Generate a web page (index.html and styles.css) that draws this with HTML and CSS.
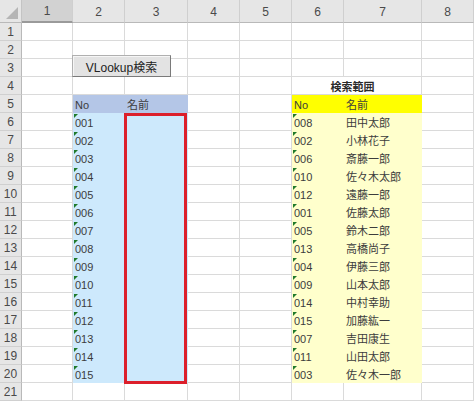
FILE: index.html
```html
<!DOCTYPE html>
<html lang="ja">
<head>
<meta charset="utf-8">
<title>VLookup</title>
<link rel="stylesheet" href="styles.css">
</head>
<body>
<div class="sheet">
  <div class="row head">
    <div class="corner"><span class="corner-tri"></span></div>
    <div class="ch sel">1</div><div class="ch">2</div><div class="ch">3</div><div class="ch">4</div><div class="ch">5</div><div class="ch">6</div><div class="ch">7</div><div class="ch">8</div>
  </div>
  <div class="row"><div class="rh">1</div><div class="c"></div><div class="c"></div><div class="c"></div><div class="c"></div><div class="c"></div><div class="c"></div><div class="c"></div><div class="c"></div></div>
  <div class="row"><div class="rh">2</div><div class="c"></div><div class="c"></div><div class="c"></div><div class="c"></div><div class="c"></div><div class="c"></div><div class="c"></div><div class="c"></div></div>
  <div class="row"><div class="rh">3</div><div class="c"></div><div class="c"></div><div class="c"></div><div class="c"></div><div class="c"></div><div class="c"></div><div class="c"></div><div class="c"></div></div>
  <div class="row"><div class="rh">4</div><div class="c"></div><div class="c"></div><div class="c"></div><div class="c"></div><div class="c"></div><div class="c merged">検索範囲</div><div class="c"></div></div>
  <div class="row"><div class="rh">5</div><div class="c"></div><div class="c bh">No</div><div class="c bh">名前</div><div class="c"></div><div class="c"></div><div class="c yh">No</div><div class="c yh">名前</div><div class="c"></div></div>
  <div class="row"><div class="rh">6</div><div class="c"></div><div class="c b tri">001</div><div class="c b"></div><div class="c"></div><div class="c"></div><div class="c ly tri">008</div><div class="c ly">田中太郎</div><div class="c"></div></div>
  <div class="row"><div class="rh">7</div><div class="c"></div><div class="c b tri">002</div><div class="c b"></div><div class="c"></div><div class="c"></div><div class="c ly tri">002</div><div class="c ly">小林花子</div><div class="c"></div></div>
  <div class="row"><div class="rh">8</div><div class="c"></div><div class="c b tri">003</div><div class="c b"></div><div class="c"></div><div class="c"></div><div class="c ly tri">006</div><div class="c ly">斎藤一郎</div><div class="c"></div></div>
  <div class="row"><div class="rh">9</div><div class="c"></div><div class="c b tri">004</div><div class="c b"></div><div class="c"></div><div class="c"></div><div class="c ly tri">010</div><div class="c ly">佐々木太郎</div><div class="c"></div></div>
  <div class="row"><div class="rh">10</div><div class="c"></div><div class="c b tri">005</div><div class="c b"></div><div class="c"></div><div class="c"></div><div class="c ly tri">012</div><div class="c ly">遠藤一郎</div><div class="c"></div></div>
  <div class="row"><div class="rh">11</div><div class="c"></div><div class="c b tri">006</div><div class="c b"></div><div class="c"></div><div class="c"></div><div class="c ly tri">001</div><div class="c ly">佐藤太郎</div><div class="c"></div></div>
  <div class="row"><div class="rh">12</div><div class="c"></div><div class="c b tri">007</div><div class="c b"></div><div class="c"></div><div class="c"></div><div class="c ly tri">005</div><div class="c ly">鈴木二郎</div><div class="c"></div></div>
  <div class="row"><div class="rh">13</div><div class="c"></div><div class="c b tri">008</div><div class="c b"></div><div class="c"></div><div class="c"></div><div class="c ly tri">013</div><div class="c ly">高橋尚子</div><div class="c"></div></div>
  <div class="row"><div class="rh">14</div><div class="c"></div><div class="c b tri">009</div><div class="c b"></div><div class="c"></div><div class="c"></div><div class="c ly tri">004</div><div class="c ly">伊藤三郎</div><div class="c"></div></div>
  <div class="row"><div class="rh">15</div><div class="c"></div><div class="c b tri">010</div><div class="c b"></div><div class="c"></div><div class="c"></div><div class="c ly tri">009</div><div class="c ly">山本太郎</div><div class="c"></div></div>
  <div class="row"><div class="rh">16</div><div class="c"></div><div class="c b tri">011</div><div class="c b"></div><div class="c"></div><div class="c"></div><div class="c ly tri">014</div><div class="c ly">中村幸助</div><div class="c"></div></div>
  <div class="row"><div class="rh">17</div><div class="c"></div><div class="c b tri">012</div><div class="c b"></div><div class="c"></div><div class="c"></div><div class="c ly tri">015</div><div class="c ly">加藤紘一</div><div class="c"></div></div>
  <div class="row"><div class="rh">18</div><div class="c"></div><div class="c b tri">013</div><div class="c b"></div><div class="c"></div><div class="c"></div><div class="c ly tri">007</div><div class="c ly">吉田康生</div><div class="c"></div></div>
  <div class="row"><div class="rh">19</div><div class="c"></div><div class="c b tri">014</div><div class="c b"></div><div class="c"></div><div class="c"></div><div class="c ly tri">011</div><div class="c ly">山田太郎</div><div class="c"></div></div>
  <div class="row"><div class="rh">20</div><div class="c"></div><div class="c b tri">015</div><div class="c b"></div><div class="c"></div><div class="c"></div><div class="c ly tri">003</div><div class="c ly">佐々木一郎</div><div class="c"></div></div>
  <div class="row"><div class="rh">21</div><div class="c"></div><div class="c"></div><div class="c"></div><div class="c"></div><div class="c"></div><div class="c"></div><div class="c"></div><div class="c"></div></div>

  <button class="vbtn" type="button">VLookup検索</button>
  <div class="redbox"></div>
</div>
</body>
</html>
```
FILE: styles.css
```css
html, body {
  margin: 0;
  padding: 0;
  background: #ffffff;
}
body {
  width: 474px;
  height: 401px;
  overflow: hidden;
  font-family: "Liberation Sans", "Noto Sans CJK JP", sans-serif;
  font-size: 11px;
  color: #3c3c3c;
}
.sheet {
  position: relative;
  width: 474px;
  height: 401px;
}
.row {
  display: grid;
  grid-template-columns: 22px 51px 52px 63px 52px 52px 52px 78px 52px;
  height: 18px;
}
.row.head {
  height: 23px;
}
.corner {
  position: relative;
  background: #e6e6e6;
  border-right: 1px solid #c4c4c4;
  border-bottom: 1px solid #b9b9b9;
  box-sizing: border-box;
}
.corner-tri {
  position: absolute;
  right: 3px;
  bottom: 3px;
  width: 0;
  height: 0;
  border-left: 12px solid transparent;
  border-bottom: 12px solid #b5b5b5;
}
.ch {
  background: #e6e6e6;
  border-right: 1px solid #cfcfcf;
  border-bottom: 1px solid #b9b9b9;
  box-sizing: border-box;
  display: flex;
  align-items: center;
  justify-content: center;
  font-size: 12px;
  color: #4a4a4a;
  padding-top: 1px;
}
.ch.sel {
  background: #d2d2d2;
  border-bottom: 2px solid #9a9a9a;
}
.rh {
  background: #e6e6e6;
  border-right: 1px solid #b9b9b9;
  border-bottom: 1px solid #d0d0d0;
  box-sizing: border-box;
  display: flex;
  align-items: center;
  justify-content: center;
  font-size: 12px;
  color: #4a4a4a;
}
.c {
  position: relative;
  border-right: 1px solid #dadada;
  border-bottom: 1px solid #dadada;
  box-sizing: border-box;
  display: flex;
  align-items: flex-end;
  padding-left: 2px;
  line-height: 14px;
  white-space: nowrap;
}
.merged {
  grid-column: span 2;
  justify-content: center;
  padding-left: 0;
  padding-right: 8px;
  font-weight: bold;
  color: #2a2a2a;
}
.bh {
  background: #b4c6e7;
  border-color: #b4c6e7;
}
.b {
  background: #cde9fc;
  border-color: #cde9fc;
}
.yh {
  background: #ffff00;
  border-color: #ffff00;
}
.ly {
  background: #ffffcc;
  border-color: #ffffcc;
}
.tri::before {
  content: "";
  position: absolute;
  left: 1px;
  top: 1px;
  width: 0;
  height: 0;
  border-top: 4px solid #1f7a2a;
  border-right: 4px solid transparent;
}
.vbtn {
  position: absolute;
  left: 72px;
  top: 55px;
  width: 99px;
  height: 22px;
  margin: 0;
  padding: 0;
  background: #e3e3e3;
  border: 1px solid #b0b0b0;
  border-right-color: #7a7a7a;
  border-bottom-color: #7a7a7a;
  box-shadow: inset 1px 1px 0 #f6f6f6;
  font-family: "Liberation Sans", "Noto Sans CJK JP", sans-serif;
  font-size: 12px;
  color: #222222;
}
.redbox {
  position: absolute;
  left: 124px;
  top: 113px;
  width: 63px;
  height: 271px;
  box-sizing: border-box;
  border: 3px solid #dc1f2b;
}
```
